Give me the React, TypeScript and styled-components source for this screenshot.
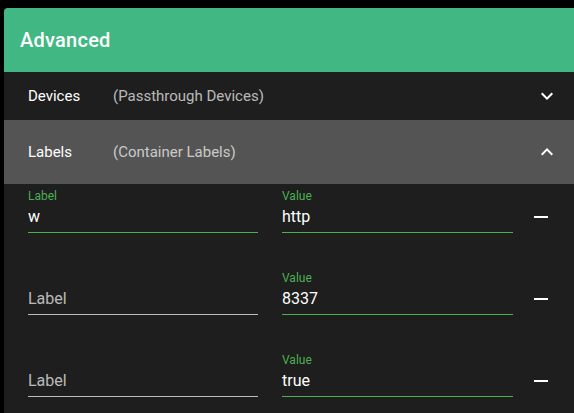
import React from 'react';
import styled, { createGlobalStyle } from 'styled-components';

const GlobalStyle = createGlobalStyle`
  html, body {
    margin: 0;
    padding: 0;
    background: #000;
    overflow: hidden;
  }
  body {
    font-family: Roboto, "Liberation Sans", sans-serif;
  }
`;

const Page = styled.div`
  padding: 8px 0 0 4px;
  width: 574px;
  height: 413px;
  box-sizing: border-box;
  overflow: hidden;
`;

const Card = styled.div`
  width: 579px;
  border-radius: 4px 4px 0 0;
  overflow: hidden;
  background: #1e1e1e;
`;

const CardTitle = styled.div`
  height: 64px;
  display: flex;
  align-items: center;
  padding: 0 16px;
  background: #41b883;
  color: #fff;
  font-size: 20px;
  font-weight: 500;
  letter-spacing: 0.0125em;
`;

const PanelHeader = styled.div<{ $open?: boolean }>`
  display: flex;
  align-items: center;
  padding: 0 24px;
  height: ${({ $open }) => ($open ? '64px' : '48px')};
  background: ${({ $open }) => ($open ? '#545454' : '#1e1e1e')};
  font-size: 15px;
  color: #fff;
`;

const HeaderName = styled.span`
  width: 85px;
  flex-shrink: 0;
`;

const HeaderHint = styled.span`
  flex: 1;
  color: rgba(255, 255, 255, 0.7);
`;

const Chevron = styled.svg`
  width: 24px;
  height: 24px;
  fill: #fff;
`;

const PanelContent = styled.div`
  padding: 0 24px;
`;

const FieldRow = styled.div`
  display: grid;
  grid-template-columns: 230px 231px auto;
  column-gap: 24px;
  align-items: start;
  height: 82px;
  padding-top: 4px;
  box-sizing: border-box;
`;

const Field = styled.div<{ $filled?: boolean }>`
  display: flex;
  flex-direction: column;
  border-bottom: 1px solid ${({ $filled }) => ($filled ? '#4caf50' : 'rgba(255,255,255,0.7)')};
`;

const FloatLabel = styled.span<{ $hidden?: boolean }>`
  height: 16px;
  font-size: 12px;
  line-height: 16px;
  color: #4caf50;
  visibility: ${({ $hidden }) => ($hidden ? 'hidden' : 'visible')};
`;

const Input = styled.input`
  all: unset;
  font-family: Roboto, "Liberation Sans", sans-serif;
  font-size: 16px;
  line-height: 24px;
  height: 24px;
  padding: 1px 0 3px;
  color: #fff;
  &::placeholder {
    color: rgba(255, 255, 255, 0.7);
  }
`;

const RemoveButton = styled.button`
  all: unset;
  margin: 22px 0 0 -3px;
  width: 14px;
  height: 14px;
  display: flex;
  align-items: center;
`;

const MinusBar = styled.span`
  display: block;
  width: 14px;
  height: 2px;
  background: #fff;
`;

const labels = [
  { key: 'w', value: 'http' },
  { key: '', value: '8337' },
  { key: '', value: 'true' },
];

const ChevronDown = () => (
  <Chevron viewBox="0 0 24 24">
    <path d="M7.41,8.58L12,13.17L16.59,8.58L18,10L12,16L6,10L7.41,8.58Z" />
  </Chevron>
);

const ChevronUp = () => (
  <Chevron viewBox="0 0 24 24">
    <path d="M7.41,15.41L12,10.83L16.59,15.41L18,14L12,8L6,14L7.41,15.41Z" />
  </Chevron>
);

const App = () => {
  return (
    <Page>
      <GlobalStyle />
      <Card>
        <CardTitle>Advanced</CardTitle>
        <PanelHeader>
          <HeaderName>Devices</HeaderName>
          <HeaderHint>(Passthrough Devices)</HeaderHint>
          <ChevronDown />
        </PanelHeader>
        <PanelHeader $open>
          <HeaderName>Labels</HeaderName>
          <HeaderHint>(Container Labels)</HeaderHint>
          <ChevronUp />
        </PanelHeader>
        <PanelContent>
          {labels.map((l, i) => (
            <FieldRow key={i}>
              <Field $filled={!!l.key}>
                <FloatLabel $hidden={!l.key}>Label</FloatLabel>
                <Input defaultValue={l.key} placeholder="Label" />
              </Field>
              <Field $filled>
                <FloatLabel>Value</FloatLabel>
                <Input defaultValue={l.value} />
              </Field>
              <RemoveButton>
                <MinusBar />
              </RemoveButton>
            </FieldRow>
          ))}
        </PanelContent>
      </Card>
    </Page>
  );
};

export default App;
